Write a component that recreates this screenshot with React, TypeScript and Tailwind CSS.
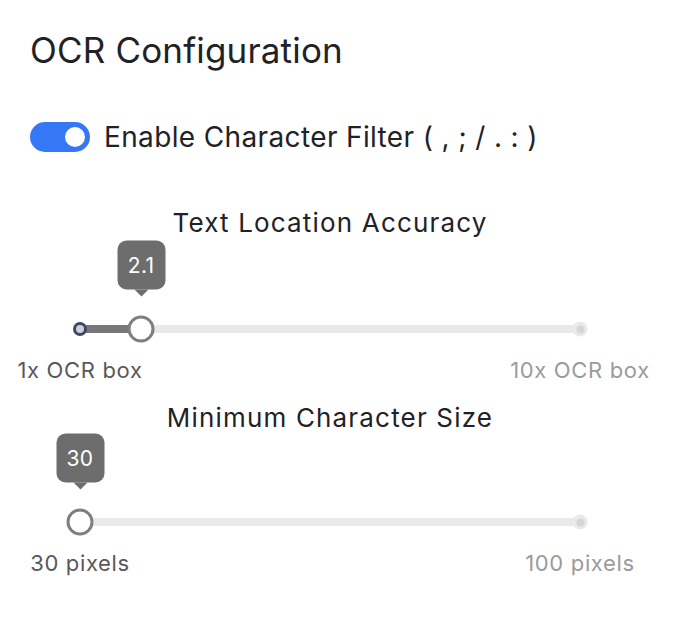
import React from 'react';

type SliderProps = {
  min: number;
  max: number;
  value: number;
  minLabel: string;
  maxLabel: string;
};

const MarkSlider: React.FC<SliderProps> = ({ min, max, value, minLabel, maxLabel }) => {
  const pct = ((value - min) / (max - min)) * 100;

  return (
    <div>
      <div className="relative mx-[50px] h-[8px] rounded-full bg-[#e9e9e9]">
        <div className="absolute left-0 top-0 h-full rounded-full bg-[#777777]" style={{ width: `${pct}%` }} />

        {/* mark dots */}
        <div className="absolute left-0 top-1/2 h-[14px] w-[14px] -translate-x-1/2 -translate-y-1/2 rounded-full border-[3px] border-[#3d4862] bg-[#cdd0d6]" />
        <div className="absolute left-full top-1/2 flex h-[15px] w-[15px] -translate-x-1/2 -translate-y-1/2 items-center justify-center rounded-full bg-[#e9e9e9]">
          <div className="h-[8px] w-[8px] rounded-full bg-[#d6d6d6]" />
        </div>

        {/* handle + tooltip */}
        <div className="absolute top-1/2 -translate-x-1/2 -translate-y-1/2" style={{ left: `${pct}%` }}>
          <div className="h-[27px] w-[27px] rounded-full border-[3.5px] border-[#7f7f7f] bg-white" />
          <div className="absolute bottom-[calc(100%+19px)] left-1/2 flex -translate-x-1/2 flex-col items-center">
            <div className="flex h-[49px] min-w-[48px] items-center justify-center rounded-[9px] bg-[#6d6d6d] px-2 text-[21px] tracking-[0.02em] text-white">
              {value}
            </div>
            <div className="h-0 w-0 border-x-[7px] border-t-[7px] border-x-transparent border-t-[#6d6d6d]" />
          </div>
        </div>
      </div>

      <div className="relative mx-[50px] mt-[25px] h-[24px] text-[22px] leading-[24px] tracking-[0.03em]">
        <span className="absolute left-0 -translate-x-1/2 whitespace-nowrap text-[#595959]">{minLabel}</span>
        <span className="absolute left-full -translate-x-1/2 whitespace-nowrap text-[#9b9b9b]">{maxLabel}</span>
      </div>
    </div>
  );
};

const App: React.FC = () => {
  return (
    <div className="min-h-[620px] bg-white pl-[30px] pt-[30px] font-['Inter',sans-serif] text-[#1f2226]">
      <h1 className="text-[35px] leading-[40px] tracking-[0.005em]">OCR Configuration</h1>

      <div className="mt-[52px] flex items-center gap-[14px]">
        <button className="flex h-[30px] w-[60px] items-center justify-end rounded-full bg-[#3478f6] pr-[5px]">
          <span className="h-[20px] w-[20px] rounded-full bg-white" />
        </button>
        <span className="text-[28px] leading-[30px] tracking-[0.013em]">Enable Character Filter ( , ; / . : )</span>
      </div>

      <div className="w-[600px]">
        <div className="mt-[56px] text-center text-[26px] leading-[30px] tracking-[0.045em]">Text Location Accuracy</div>
        <div className="mt-[87px]">
          <MarkSlider min={1} max={10} value={2.1} minLabel="1x OCR box" maxLabel="10x OCR box" />
        </div>

        <div className="mt-[21px] text-center text-[26px] leading-[30px] tracking-[0.045em]">Minimum Character Size</div>
        <div className="mt-[85px]">
          <MarkSlider min={30} max={100} value={30} minLabel="30 pixels" maxLabel="100 pixels" />
        </div>
      </div>
    </div>
  );
};

export default App;
